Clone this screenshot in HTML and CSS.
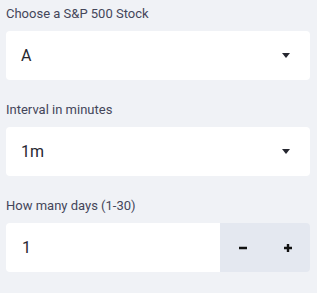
FILE: index.html
```html
<!DOCTYPE html>
<html lang="en">
<head>
    <meta charset="UTF-8">
    <title>Stock options</title>
    <link rel="stylesheet" href="styles.css">
</head>
<body>
    <div class="sidebar">
        <!-- Stock -->
        <div class="field">
            <label class="field-label">Choose a S&amp;P 500 Stock</label>
            <div class="select-box">
                <span class="select-value">A</span>
                <svg class="caret" width="8" height="5" viewBox="0 0 8 5"><path d="M0 0h8L4 5z" fill="#262730"/></svg>
            </div>
        </div>

        <!-- Interval -->
        <div class="field">
            <label class="field-label">Interval in minutes</label>
            <div class="select-box">
                <span class="select-value">1m</span>
                <svg class="caret" width="8" height="5" viewBox="0 0 8 5"><path d="M0 0h8L4 5z" fill="#262730"/></svg>
            </div>
        </div>

        <!-- Days -->
        <div class="field">
            <label class="field-label">How many days (1-30)</label>
            <div class="number-box">
                <span class="number-value">1</span>
                <div class="steppers">
                    <button class="step-button">
                        <svg width="12" height="12" viewBox="0 0 12 12"><path d="M2 6h8" stroke="#111" stroke-width="2.6"/></svg>
                    </button>
                    <button class="step-button">
                        <svg width="12" height="12" viewBox="0 0 12 12"><path d="M2 6h8M6 2v8" stroke="#111" stroke-width="2.4"/></svg>
                    </button>
                </div>
            </div>
        </div>
    </div>
</body>
</html>
```

FILE: styles.css
```css
/* Basic reset */
* {
    margin: 0;
    padding: 0;
    box-sizing: border-box;
}

body {
    font-family: Roboto, sans-serif;
    background-color: #f0f2f6;
    color: #262730;
}

.sidebar {
    display: flex;
    flex-direction: column;
    gap: 20px;
    padding: 4px 7px 0 6px;
}

.field {
    display: flex;
    flex-direction: column;
    gap: 7px;
}

.field-label {
    font-size: 13px;
    line-height: 20px;
    color: #44465a;
}

/* Select boxes */
.select-box {
    height: 49px;
    background-color: white;
    border-radius: 4px;
    display: flex;
    align-items: center;
    justify-content: space-between;
    padding: 0 20px 0 15px;
}

.select-value,
.number-value {
    font-size: 16px;
    color: #262730;
}

/* Number input */
.number-box {
    height: 49px;
    display: flex;
    border-radius: 4px;
    overflow: hidden;
}

.number-value {
    flex: 1;
    background-color: white;
    display: flex;
    align-items: center;
    padding-left: 16px;
}

.steppers {
    width: 90px;
    display: flex;
    background-color: #e4e8f0;
}

.step-button {
    flex: 1;
    border: none;
    background: none;
    display: flex;
    align-items: center;
    justify-content: center;
    cursor: pointer;
}
```
